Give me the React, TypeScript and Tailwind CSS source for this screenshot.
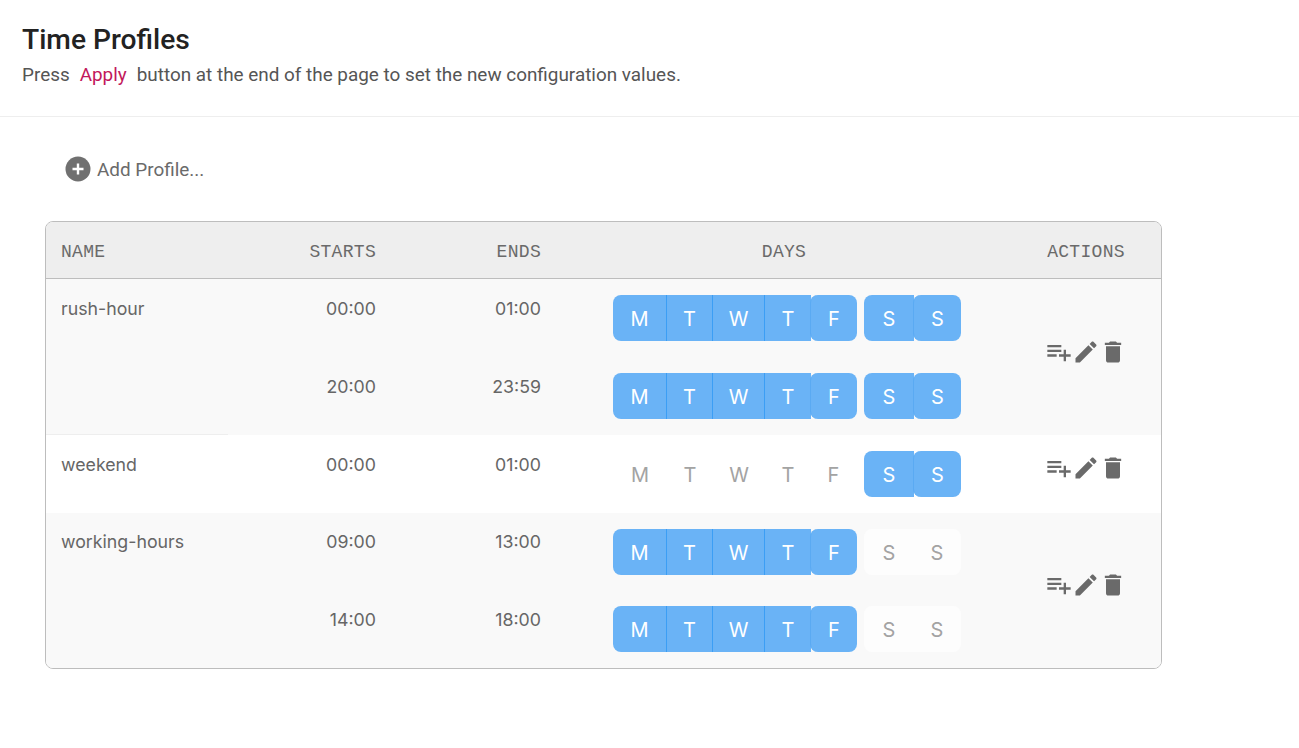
const sans = "font-['Roboto',sans-serif]";
const cellFont = "font-['Inter',sans-serif]";
const letters = [
  { l: "M", w: "w-[54px]", b: "border-r border-[#3b9ef5] rounded-l-lg" },
  { l: "T", w: "w-[46px]", b: "border-r border-[#3b9ef5]" },
  { l: "W", w: "w-[52px]", b: "border-r border-[#3b9ef5]" },
  { l: "T", w: "w-[46px]", b: "" },
  { l: "F", w: "w-[47px] -ml-px", b: "rounded-lg border-l border-[#5aaaf3]" },
];
const Btn = ({ l, on, cls, w, idle }: { l: string; on: boolean; cls: string; w: string; idle: string }) => (
  <div className={`${w} h-[46px] flex items-center justify-center pt-px text-[20px] ${cls} ${on ? "bg-[#6ab3f6] text-white" : `${idle} text-[#a3a3a3]`}`}>{l}</div>
);
const Days = ({ week, end, idle }: { week: boolean; end: boolean; idle: string }) => (
  <div className={`flex justify-center pl-[6px] ${cellFont}`}>
    <div className="flex">
      {letters.map((d, i) => (
        <Btn key={i} l={d.l} on={week} w={d.w} cls={week ? d.b : ""} idle="" />
      ))}
    </div>
    <div className="flex ml-[7px]">
      <Btn l="S" on={end} w="w-[50px]" cls="rounded-l-lg" idle={idle} />
      <Btn l="S" on={end} w="w-[48px] -ml-px" cls={`rounded-r-lg ${end ? "rounded-l-lg border-l border-[#5aaaf3]" : ""}`} idle={idle} />
    </div>
  </div>
);
const Ic = ({ d }: { d: string }) => (
  <svg viewBox="0 0 24 24" className="w-7 h-7 -ml-px fill-[#6a6a6a]"><path d={d} /></svg>
);
const Actions = () => (
  <div className="flex justify-center">
    <Ic d="M14 10H2v2h12v-2zm0-4H2v2h12V6zm4 8v-4h-2v4h-4v2h4v4h2v-4h4v-2h-4zM2 16h8v-2H2v2z" />
    <Ic d="M3 17.25V21h3.75L17.81 9.94l-3.75-3.75L3 17.25zM20.71 7.04c.39-.39.39-1.02 0-1.41l-2.34-2.34c-.39-.39-1.02-.39-1.41 0l-1.83 1.83 3.75 3.75 1.83-1.83z" />
    <Ic d="M6 19c0 1.1.9 2 2 2h8c1.1 0 2-.9 2-2V7H6v12zM19 4h-3.5l-1-1h-5l-1 1H5v2h14V4z" />
  </div>
);
const th = "font-['Liberation_Mono',monospace] text-[18px] tracking-[0.3px] font-normal text-[#6a6a6a] h-[57px] px-4 pt-1 border-b border-[#bdbdbd]";
const td = `${cellFont} text-[17.75px] text-[#666666] align-top leading-[22px]`;
const Row = ({ name, span, s, e, week, end, bg, idle, h, pt, nameCls, actCls }: { name?: string; span?: number; s: string; e: string; week: boolean; end: boolean; bg: string; idle: string; h: string; pt: string; nameCls?: string; actCls?: string }) => (
  <tr className={bg}>
    {name && <td rowSpan={span} className={`${td} ${pt} pl-[15px] ${nameCls ?? ""}`}>{name}</td>}
    <td className={`${td} ${pt} ${h} text-right pr-4`}>{s}</td>
    <td className={`${td} ${pt} ${h} text-right pr-4`}>{e}</td>
    <td className={`${h} align-top pt-4`}><Days week={week} end={end} idle={idle} /></td>
    {name && <td rowSpan={span} className={`align-middle ${actCls ?? "pb-[11px]"}`}><Actions /></td>}
  </tr>
);
export default function App() {
  return (
    <div className="w-[1299px] h-[748px] bg-white overflow-hidden">
      <header className={`${sans} h-[117px] border-b border-[#eeeeee] pl-[22px] pt-[23px]`}>
        <h1 className="text-[28.2px] leading-[34px] font-medium text-[#222222]">Time Profiles</h1>
        <p className="text-[18.9px] leading-6 mt-[6px] text-[#555555]">
          Press<span className="text-[#c2185b] mx-[10px]">Apply</span>button at the end of the page to set the new configuration values.
        </p>
      </header>
      <div className={`${sans} flex items-center ml-[65px] mt-[39px] h-[26px] text-[18.9px] text-[#6a6a6a]`}>
        <svg viewBox="0 0 26 26" className="w-[26px] h-[26px]"><circle cx="13" cy="13" r="12.5" fill="#707070" /><path d="M13 7.5v11M7.5 13h11" stroke="#ffffff" strokeWidth="2.4" /></svg>
        <span className="ml-[6px] pt-[2px]">Add Profile...</span>
      </div>
      <div className="ml-[45px] mt-[39px] w-[1117px] border border-[#bdbdbd] rounded-lg overflow-hidden">
        <table className="w-[1115px] table-fixed border-separate border-spacing-0">
          <colgroup>
            <col className="w-[182px]" /><col className="w-[164px]" /><col className="w-[165px]" /><col className="w-[454px]" /><col className="w-[150px]" />
          </colgroup>
          <thead>
            <tr className="bg-[#eeeeee]">
              <th className={`${th} text-left pl-[15px]`}>NAME</th>
              <th className={`${th} text-right`}>STARTS</th>
              <th className={`${th} text-right`}>ENDS</th>
              <th className={`${th} text-center`}>DAYS</th>
              <th className={`${th} text-center`}>ACTIONS</th>
            </tr>
          </thead>
          <tbody>
            <Row name="rush-hour" span={2} s="00:00" e="01:00" week end bg="bg-[#f9f9f9]" idle="" h="h-[78px]" pt="pt-[19px]" nameCls="border-b border-[#eeeeee]" />
            <Row s="20:00" e="23:59" week end bg="bg-[#f9f9f9]" idle="" h="h-[78px]" pt="pt-[19px]" />
            <Row name="weekend" span={1} s="00:00" e="01:00" week={false} end bg="bg-white" idle="" h="h-[78px]" pt="pt-[19px]" actCls="pb-[13px]" />
            <Row name="working-hours" span={2} s="09:00" e="13:00" week end={false} bg="bg-[#f9f9f9]" idle="bg-[#fdfdfd]" h="h-[77px]" pt="pt-[18px]" />
            <Row s="14:00" e="18:00" week end={false} bg="bg-[#f9f9f9]" idle="bg-[#fdfdfd]" h="h-[78px]" pt="pt-[19px]" />
          </tbody>
        </table>
      </div>
    </div>
  );
}
